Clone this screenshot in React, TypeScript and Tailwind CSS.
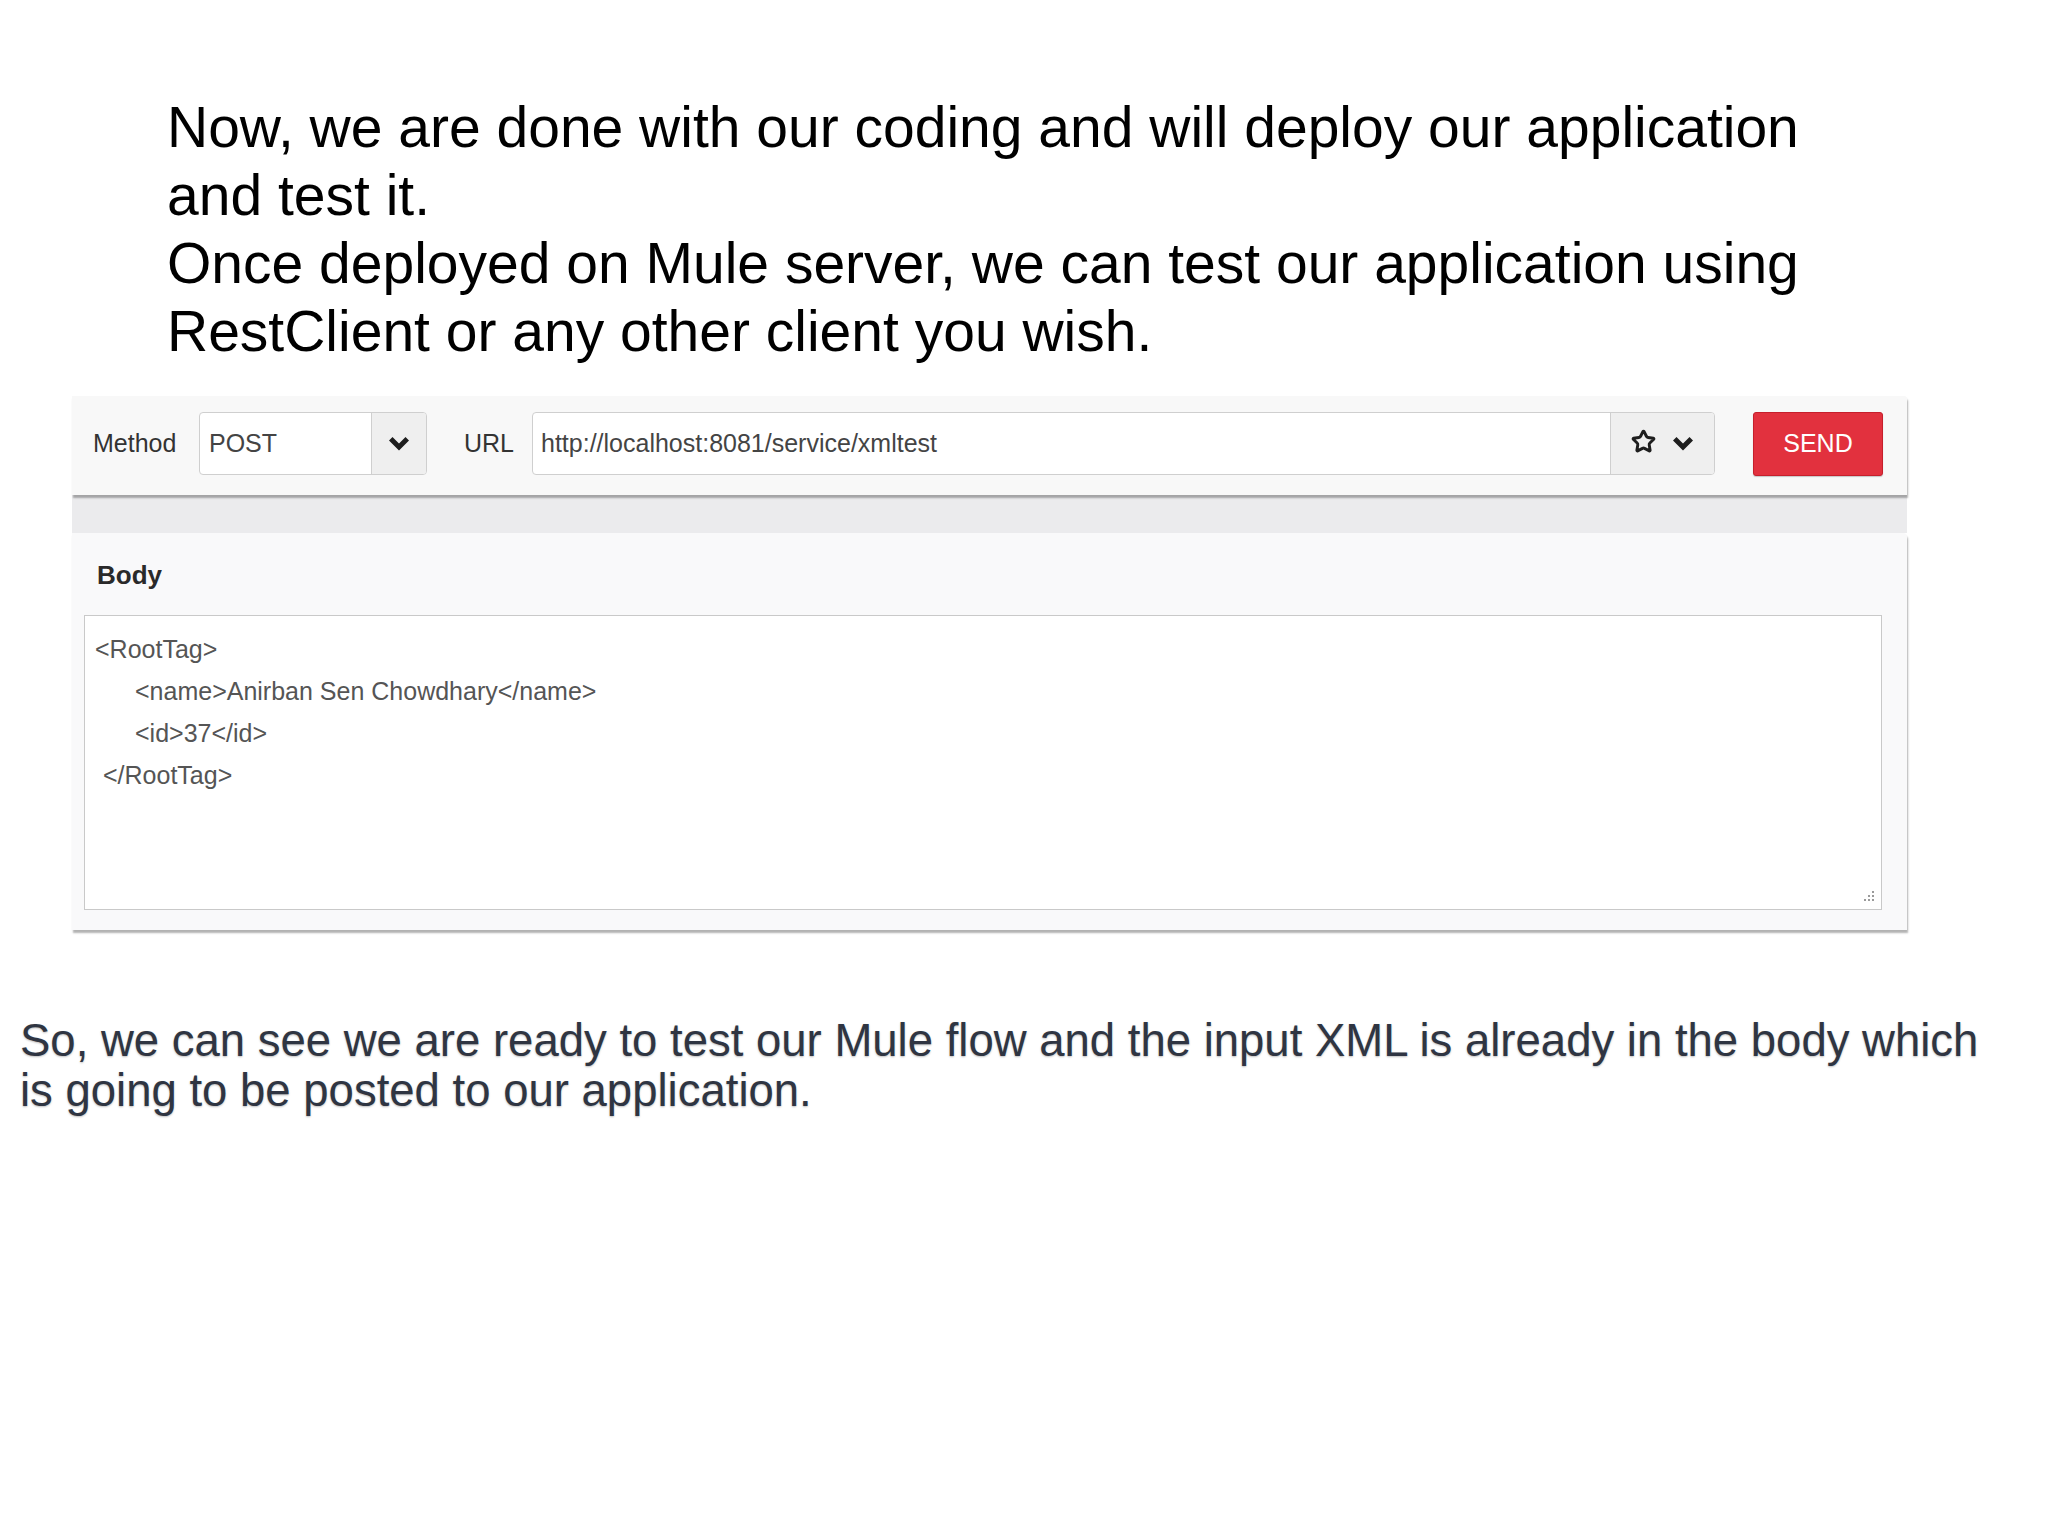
import React from 'react';
import { Star } from 'lucide-react';

const xmlLines = [
  { text: '<RootTag>', indent: 'pl-[10px]' },
  { text: '<name>Anirban Sen Chowdhary</name>', indent: 'pl-[50px]' },
  { text: '<id>37</id>', indent: 'pl-[50px]' },
  { text: '</RootTag>', indent: 'pl-[18px]' },
];

// heavy, short chevron like the old font-awesome glyph
const Chevron: React.FC = () => (
  <svg width="22" height="16" viewBox="0 0 22 16">
    <path d="M1 4.5 L4.5 1 L11 7.5 L17.5 1 L21 4.5 L11 14.5 Z" fill="#1e1e1e" />
  </svg>
);

const ResizeGrip: React.FC = () => (
  <svg width="14" height="14" viewBox="0 0 14 14" className="absolute right-[6px] bottom-[6px]">
    {[
      [11, 2], [11, 6], [7, 6], [11, 10], [7, 10], [3, 10],
    ].map(([x, y], i) => (
      <rect key={i} x={x} y={y} width="2" height="2" fill="#9a9a9a" />
    ))}
  </svg>
);

const RestClientPanel: React.FC = () => {
  return (
    <div className="ml-[72px] w-[1835px] font-['Liberation_Sans',Arial,sans-serif]">
      {/* request bar */}
      <div className="h-[99px] bg-[#f8f8f8] pl-[21px] pr-[22px] pt-[16px] flex items-start shadow-[1px_3px_2px_rgba(0,0,0,0.3)] rounded-tr-[3px] relative z-10">
        <span className="text-[25px] text-[#333] mt-[13px] w-[106px]">Method</span>
        <div className="flex h-[63px] w-[228px] border border-[#cfcfcf] rounded-[4px] bg-white overflow-hidden">
          <div className="w-[171px] pl-[9px] flex items-center text-[25px] text-[#444]">POST</div>
          <div className="flex-1 border-l border-[#cfcfcf] bg-[#efefef] flex items-center justify-center">
            <Chevron />
          </div>
        </div>
        <span className="text-[25px] text-[#333] mt-[13px] ml-[37px] w-[68px]">URL</span>
        <div className="flex h-[63px] w-[1183px] border border-[#cfcfcf] rounded-[4px] bg-white overflow-hidden">
          <div className="w-[1077px] pl-[8px] flex items-center text-[25px] text-[#444]">
            http://localhost:8081/service/xmltest
          </div>
          <div className="flex-1 border-l border-[#cfcfcf] bg-[#efefef] flex items-center justify-center gap-[16px]">
            <Star className="w-[25px] h-[25px] text-[#1e1e1e] -mt-[4px]" strokeWidth={2.8} />
            <Chevron />
          </div>
        </div>
        <button className="ml-[38px] h-[64px] w-[130px] rounded-[3px] bg-[#e2313e] border border-[#c61f2c] text-white text-[25px] flex items-center justify-center shadow-[0_1px_1px_rgba(0,0,0,0.2)]">
          SEND
        </button>
      </div>

      {/* spacer band */}
      <div className="h-[38px] bg-[#ebebed]" />

      {/* body panel */}
      <div className="bg-[#f9f9fa] pt-[26px] pb-[20px] pl-[12px] pr-[25px] rounded-tr-[4px] shadow-[1px_3px_2px_rgba(0,0,0,0.3)]">
        <div className="pl-[13px] text-[26px] font-bold text-[#2a2a2a] h-[56px] leading-[32px]">Body</div>
        <div className="relative h-[295px] bg-white border border-[#c9c9c9] pt-[12px]">
          {xmlLines.map((l, i) => (
            <div key={i} className={`${l.indent} h-[42px] leading-[42px] text-[25px] text-[#555] whitespace-pre`}>
              {l.text}
            </div>
          ))}
          <ResizeGrip />
        </div>
      </div>
    </div>
  );
};

export default function App() {
  return (
    <div className="w-[2048px] h-[1536px] bg-white overflow-hidden font-['Liberation_Sans',Arial,sans-serif]">
      <div className="pt-[93px] pl-[167px] w-[1850px] text-[57px] leading-[68px] text-black">
        <p>Now, we are done with our coding and will deploy our application and test it.</p>
        <p>Once deployed on Mule server, we can test our application using RestClient or any other client you wish.</p>
      </div>

      <div className="mt-[31px]">
        <RestClientPanel />
      </div>

      <div className="mt-[86px] pl-[20px] w-[2000px] text-[45.5px] leading-[50px] text-[#2f3542] [text-shadow:0_1px_2px_rgba(0,0,0,0.25)]">
        So, we can see we are ready to test our Mule flow and the input XML is already in the body which is going to be posted to our application.
      </div>
    </div>
  );
}
